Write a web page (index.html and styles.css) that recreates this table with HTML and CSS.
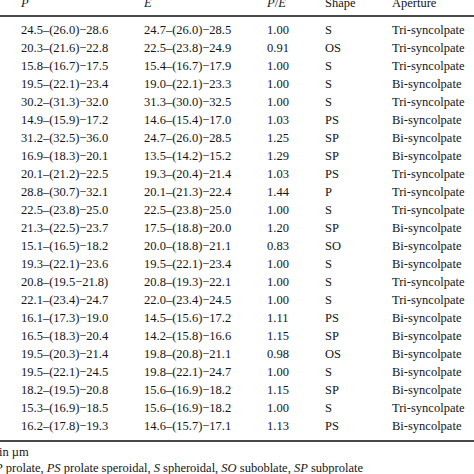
FILE: index.html
```html
<!DOCTYPE html>
<html>
<head>
<meta charset="utf-8">
<link rel="stylesheet" href="styles.css">
</head>
<body>
<div class="sheet">
  <div class="row head">
    <div><i>P</i></div><div><i>E</i></div><div><i>P</i>/<i>E</i></div><div>Shape</div><div>Aperture</div>
  </div>
  <div class="rule"></div>
  <div class="body">
    <div class="row"><div>24.5–(26.0)−28.6</div><div>24.7–(26.0)−28.5</div><div>1.00</div><div>S</div><div>Tri-syncolpate</div></div>
    <div class="row"><div>20.3–(21.6)−22.8</div><div>22.5–(23.8)−24.9</div><div>0.91</div><div>OS</div><div>Tri-syncolpate</div></div>
    <div class="row"><div>15.8–(16.7)−17.5</div><div>15.4–(16.7)−17.9</div><div>1.00</div><div>S</div><div>Tri-syncolpate</div></div>
    <div class="row"><div>19.5–(22.1)−23.4</div><div>19.0–(22.1)−23.3</div><div>1.00</div><div>S</div><div>Bi-syncolpate</div></div>
    <div class="row"><div>30.2–(31.3)−32.0</div><div>31.3–(30.0)−32.5</div><div>1.00</div><div>S</div><div>Tri-syncolpate</div></div>
    <div class="row"><div>14.9–(15.9)−17.2</div><div>14.6–(15.4)−17.0</div><div>1.03</div><div>PS</div><div>Bi-syncolpate</div></div>
    <div class="row"><div>31.2–(32.5)−36.0</div><div>24.7–(26.0)−28.5</div><div>1.25</div><div>SP</div><div>Bi-syncolpate</div></div>
    <div class="row"><div>16.9–(18.3)−20.1</div><div>13.5–(14.2)−15.2</div><div>1.29</div><div>SP</div><div>Bi-syncolpate</div></div>
    <div class="row"><div>20.1–(21.2)−22.5</div><div>19.3–(20.4)−21.4</div><div>1.03</div><div>PS</div><div>Tri-syncolpate</div></div>
    <div class="row"><div>28.8–(30.7)−32.1</div><div>20.1–(21.3)−22.4</div><div>1.44</div><div>P</div><div>Tri-syncolpate</div></div>
    <div class="row"><div>22.5–(23.8)−25.0</div><div>22.5–(23.8)−25.0</div><div>1.00</div><div>S</div><div>Tri-syncolpate</div></div>
    <div class="row"><div>21.3–(22.5)−23.7</div><div>17.5–(18.8)−20.0</div><div>1.20</div><div>SP</div><div>Bi-syncolpate</div></div>
    <div class="row"><div>15.1–(16.5)−18.2</div><div>20.0–(18.8)−21.1</div><div>0.83</div><div>SO</div><div>Bi-syncolpate</div></div>
    <div class="row"><div>19.3–(22.1)−23.6</div><div>19.5–(22.1)−23.4</div><div>1.00</div><div>S</div><div>Bi-syncolpate</div></div>
    <div class="row"><div>20.8–(19.5−21.8)</div><div>20.8–(19.3)−22.1</div><div>1.00</div><div>S</div><div>Tri-syncolpate</div></div>
    <div class="row"><div>22.1–(23.4)−24.7</div><div>22.0–(23.4)−24.5</div><div>1.00</div><div>S</div><div>Tri-syncolpate</div></div>
    <div class="row"><div>16.1–(17.3)−19.0</div><div>14.5–(15.6)−17.2</div><div>1.11</div><div>PS</div><div>Bi-syncolpate</div></div>
    <div class="row"><div>16.5–(18.3)−20.4</div><div>14.2–(15.8)−16.6</div><div>1.15</div><div>SP</div><div>Bi-syncolpate</div></div>
    <div class="row"><div>19.5–(20.3)−21.4</div><div>19.8–(20.8)−21.1</div><div>0.98</div><div>OS</div><div>Bi-syncolpate</div></div>
    <div class="row"><div>19.5–(22.1)−24.5</div><div>19.8–(22.1)−24.7</div><div>1.00</div><div>S</div><div>Bi-syncolpate</div></div>
    <div class="row"><div>18.2–(19.5)−20.8</div><div>15.6–(16.9)−18.2</div><div>1.15</div><div>SP</div><div>Bi-syncolpate</div></div>
    <div class="row"><div>15.3–(16.9)−18.5</div><div>15.6–(16.9)−18.2</div><div>1.00</div><div>S</div><div>Tri-syncolpate</div></div>
    <div class="row"><div>16.2–(17.8)−19.3</div><div>14.6–(15.7)−17.1</div><div>1.13</div><div>PS</div><div>Bi-syncolpate</div></div>
  </div>
  <div class="rule"></div>
  <div class="notes">
    <p class="note unit">in µm</p>
    <p class="note abbr"><i>P</i> prolate, <i>PS</i> prolate speroidal, <i>S</i> spheroidal, <i>SO</i> suboblate, <i>SP</i> subprolate</p>
  </div>
</div>
</body>
</html>
```
FILE: styles.css
```css
html, body {
  margin: 0;
  padding: 0;
  background: #ffffff;
}
body {
  width: 474px;
  height: 474px;
  overflow: hidden;
  font-family: "Liberation Serif", "Times New Roman", serif;
  font-size: 12.5px;
  color: #151515;
}
.sheet {
  margin-top: -6px;
}
.row {
  display: grid;
  grid-template-columns: 123px 123px 58px 67px 1fr;
  padding-left: 21px;
  height: 18px;
  line-height: 18px;
  white-space: nowrap;
}
.head {
  margin-bottom: 3px;
}
.rule {
  height: 2px;
  background: #4a4a4a;
}
.body {
  padding: 4px 0 5px;
}
.notes {
  padding-top: 2px;
}
.note {
  margin: 0;
  height: 16px;
  line-height: 16px;
  white-space: nowrap;
}
.unit {
  margin-left: -1px;
}
.abbr {
  margin-left: -5px;
}
```
